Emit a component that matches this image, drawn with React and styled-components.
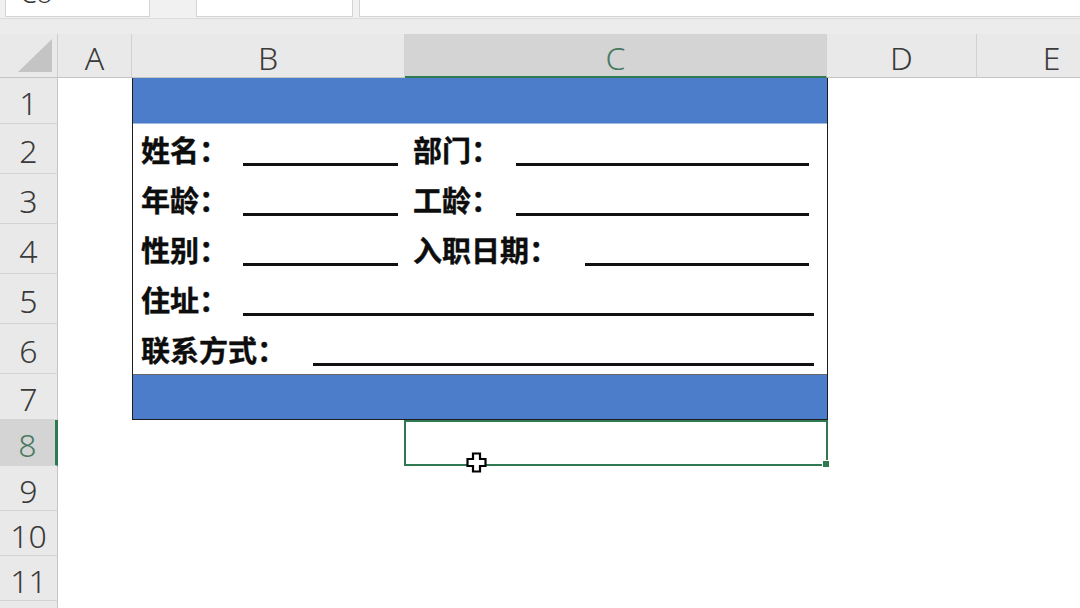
import React from 'react';
import styled, { createGlobalStyle } from 'styled-components';

const GlobalStyle = createGlobalStyle`
  html, body {
    margin: 0;
    padding: 0;
    background: #ffffff;
    overflow: hidden;
  }
`;

const columns = [
  { name: 'A' },
  { name: 'B' },
  { name: 'C', selected: true },
  { name: 'D' },
  { name: 'E' },
];

// row 12 is only a sliver at the bottom edge, no number visible
const rowNumbers = [1, 2, 3, 4, 5, 6, 7, 8, 9, 10, 11, 12];

const formRows = [
  [
    { label: '姓名：', labelWidth: 102, lineWidth: 155 },
    { label: '部门：', labelWidth: 103, lineWidth: 293 },
  ],
  [
    { label: '年龄：', labelWidth: 102, lineWidth: 155 },
    { label: '工龄：', labelWidth: 103, lineWidth: 293 },
  ],
  [
    { label: '性别：', labelWidth: 102, lineWidth: 155 },
    { label: '入职日期：', labelWidth: 172, lineWidth: 224 },
  ],
  [{ label: '住址：', labelWidth: 102, lineWidth: 571 }],
  [{ label: '联系方式：', labelWidth: 172, lineWidth: 501 }],
];

const App = () => {
  return (
    <Page>
      <GlobalStyle />
      <FormulaStrip>
        <NameBox>
          <NameText>C8</NameText>
        </NameBox>
        <FxBox />
        <FormulaInput />
      </FormulaStrip>
      <Gutter />
      <Sheet>
        <Corner>
          <svg width="34" height="33" viewBox="0 0 34 33">
            <polygon points="34,0 34,33 0,33" fill="#c4c4c4" />
          </svg>
        </Corner>
        {columns.map((col) => (
          <ColHeader key={col.name} $selected={col.selected}>
            {col.name}
          </ColHeader>
        ))}
        {rowNumbers.map((n) => (
          <RowHeader key={n} $row={n + 1} $selected={n === 8}>
            {n < 12 ? n : ''}
          </RowHeader>
        ))}

        <FormBox>
          <BlueBar $height={46} />
          {formRows.map((row, i) => (
            <FormRow key={i}>
              {row.map((field) => (
                <Field key={field.label}>
                  <Label $width={field.labelWidth}>{field.label}</Label>
                  <Blank $width={field.lineWidth} />
                </Field>
              ))}
            </FormRow>
          ))}
          <BlueBar $grow />
        </FormBox>

        <Selection>
          <FillHandle />
          <Cursor>
            <svg width="21" height="21" viewBox="0 0 21 21">
              <polygon
                points="7,1.5 14,1.5 14,7 19.5,7 19.5,14 14,14 14,19.5 7,19.5 7,14 1.5,14 1.5,7 7,7"
                fill="#ffffff"
                stroke="#000000"
                strokeWidth="2.2"
                strokeLinejoin="miter"
              />
            </svg>
          </Cursor>
        </Selection>
      </Sheet>
    </Page>
  );
};

export default App;

const Page = styled.div`
  width: 1080px;
  height: 608px;
  overflow: hidden;
  background: #ffffff;
  font-family: "Noto Sans", "Noto Sans CJK SC", sans-serif;
`;

const FormulaStrip = styled.div`
  height: 18px;
  display: flex;
  align-items: flex-start;
  background: #f1f1f1;
  border-bottom: 1px solid #dcdcdc;
`;

const NameBox = styled.div`
  margin-left: 5px;
  width: 145px;
  height: 17px;
  background: #ffffff;
  border: 1px solid #d4d4d4;
  border-top: none;
  box-sizing: border-box;
  overflow: hidden;
  padding-left: 14px;
`;

const NameText = styled.div`
  margin-top: -22px;
  font-size: 27px;
  line-height: 30px;
  color: #333333;
  font-family: "Noto Sans", sans-serif;
  font-weight: 300;
`;

const FxBox = styled.div`
  margin-left: 46px;
  width: 157px;
  height: 17px;
  background: #ffffff;
  border: 1px solid #d4d4d4;
  border-top: none;
  box-sizing: border-box;
`;

const FormulaInput = styled.div`
  margin-left: 6px;
  flex: 1;
  height: 17px;
  background: #ffffff;
  border: 1px solid #d4d4d4;
  border-top: none;
  border-right: none;
  box-sizing: border-box;
`;

const Gutter = styled.div`
  height: 15px;
  background: #ececec;
`;

const Sheet = styled.div`
  display: grid;
  grid-template-columns: 58px 74px 273px 422px 150px 150px 1fr;
  grid-template-rows: 44px 46px 50px 50px 50px 50px 50px 46px 46px 45px 45px 45px 45px;
`;

const HeaderBase = styled.div`
  display: flex;
  align-items: center;
  justify-content: center;
  background: #e9e9e9;
  color: #3a3a3a;
  font-family: "Noto Sans", "Open Sans", sans-serif;
  font-weight: 300;
  font-size: 32px;
  box-sizing: border-box;
`;

const Corner = styled(HeaderBase)`
  align-items: flex-end;
  justify-content: flex-end;
  padding: 0 5px 5px 0;
  border-right: 1px solid #cfcfcf;
  border-bottom: 1px solid #c4c4c4;
`;

const ColHeader = styled(HeaderBase)`
  padding-top: 4px;
  background: ${(p) => (p.$selected ? '#d4d4d4' : '#e9e9e9')};
  color: ${(p) => (p.$selected ? '#4a7a63' : '#3a3a3a')};
  border-right: 1px solid #d2d2d2;
  border-bottom: ${(p) => (p.$selected ? '2px solid #2f7a52' : '1px solid #c4c4c4')};
`;

const RowHeader = styled(HeaderBase)`
  grid-column: 1;
  grid-row: ${(p) => p.$row};
  padding-top: 4px;
  background: ${(p) => (p.$selected ? '#d4d4d4' : '#e9e9e9')};
  color: ${(p) => (p.$selected ? '#4a7a63' : '#3a3a3a')};
  border-bottom: 1px solid #d4d4d4;
  border-right: ${(p) => (p.$selected ? '3px solid #2f7a52' : '1px solid #c4c4c4')};
`;

const FormBox = styled.div`
  grid-column: 3 / 5;
  grid-row: 2 / 9;
  display: flex;
  flex-direction: column;
  border-left: 1px solid #1d1d1d;
  border-right: 1px solid #1d1d1d;
  border-bottom: 1px solid #1d1d1d;
  margin-right: -1px;
  box-sizing: border-box;
  background: #ffffff;
`;

const BlueBar = styled.div`
  height: ${(p) => (p.$height ? `${p.$height}px` : 'auto')};
  flex: ${(p) => (p.$grow ? 1 : 'none')};
  background: #4c7dca;
  border-bottom: ${(p) => (p.$height ? '1px solid #9fb8e0' : 'none')};
  border-top: ${(p) => (p.$grow ? '1px solid #6a6a6a' : 'none')};
  box-sizing: border-box;
`;

const FormRow = styled.div`
  height: 50px;
  display: flex;
  gap: 15px;
  padding-left: 8px;
  box-sizing: border-box;
`;

const Field = styled.div`
  display: flex;
  align-items: flex-start;
`;

const Label = styled.div`
  width: ${(p) => p.$width}px;
  height: 50px;
  line-height: 50px;
  font-family: "Noto Sans CJK SC", "Noto Sans", sans-serif;
  font-weight: 700;
  font-size: 29px;
  color: #0d0d0d;
  -webkit-text-stroke: 0.4px #0d0d0d;
  white-space: nowrap;
`;

const Blank = styled.div`
  width: ${(p) => p.$width}px;
  height: 39px;
  border-bottom: 3px solid #111111;
`;

const Selection = styled.div`
  grid-column: 4;
  grid-row: 9;
  position: relative;
  margin-left: -1px;
  margin-right: -1px;
  border: 2px solid #2f7a52;
  box-sizing: border-box;
`;

const FillHandle = styled.div`
  position: absolute;
  right: -4px;
  bottom: -4px;
  width: 6px;
  height: 6px;
  background: #2f7a52;
  border: 1px solid #ffffff;
`;

const Cursor = styled.div`
  position: absolute;
  left: 60px;
  top: 30px;
  width: 21px;
  height: 21px;
`;
